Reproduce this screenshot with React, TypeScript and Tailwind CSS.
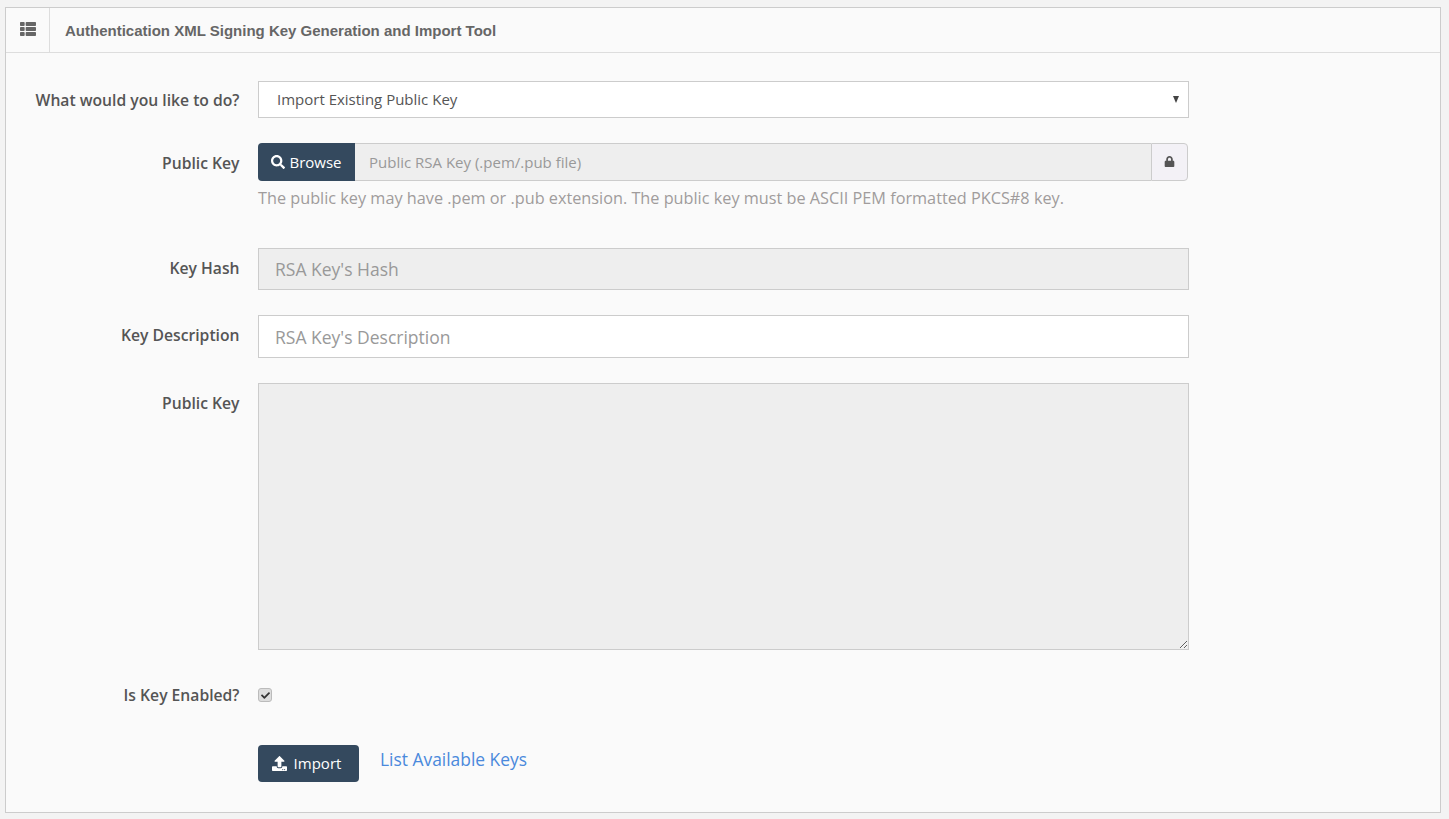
import React from "react";
import { FaLock, FaSearch, FaThList, FaUpload, FaCheck } from "react-icons/fa";

const labelClass = "w-[234px] shrink-0 text-right text-[15.7px] font-semibold text-[#555] pr-[0.5px]";

const App = () => {
  return (
    <div className="h-[819px] overflow-hidden bg-[#f3f3f3] pl-[5px] pr-2 pt-[7px] font-['Open_Sans',sans-serif]">
      <div className="h-[806px] border border-[#cccccc] bg-[#fafafa]">
        <header className="flex h-[45px] items-center border-b border-[#dddddd]">
          <div className="flex h-[44px] w-[44px] shrink-0 items-center justify-center border-r border-[#dddddd] pb-[2px] text-[#666]">
            <FaThList className="h-[16px] w-[16px]" />
          </div>
          <h1 className="pl-[15px] pt-[2px] font-['Liberation_Sans',sans-serif] text-[15px] font-bold text-[#666]">
            Authentication XML Signing Key Generation and Import Tool
          </h1>
        </header>

        <form className="pt-[28px]">
          <div className="flex items-center">
            <label className={`${labelClass} pt-[2px]`}>What would you like to do?</label>
            <div className="relative ml-[18px] w-[931px]">
              <select className="h-[37px] w-full appearance-none border border-[#cccccc] bg-white pl-[18px] text-[15px] text-[#555]">
                <option>Import Existing Public Key</option>
              </select>
              <span className="absolute right-[10px] top-[15px] h-0 w-0 border-x-[3.5px] border-t-[7px] border-x-transparent border-t-[#444]" />
            </div>
          </div>

          <div className="mt-[25px] flex items-center">
            <label className={`${labelClass} pt-[4px]`}>Public Key</label>
            <div className="ml-[18px] flex h-[38px] w-[930px]">
              <button
                type="button"
                className="flex w-[97px] shrink-0 items-center justify-center gap-1 rounded-l-[4px] bg-[#34495e] text-[15px] font-medium text-white"
              >
                <FaSearch className="h-[14px] w-[14px]" />
                Browse
              </button>
              <input
                disabled
                placeholder="Public RSA Key (.pem/.pub file)"
                className="min-w-0 flex-1 border-y border-[#cccccc] bg-[#eeeeee] px-[14px] text-[15px] placeholder:text-[#999]"
              />
              <div className="flex w-[37px] shrink-0 items-center justify-center rounded-r-[4px] border border-[#cccccc] bg-[#f3f1f6] pb-[1px] text-[#555]">
                <FaLock className="h-[11px] w-[11px]" />
              </div>
            </div>
          </div>
          <p className="ml-[252px] mt-[6px] text-[16.25px] leading-[22px] text-[#a09c9c]">
            The public key may have .pem or .pub extension. The public key must be ASCII PEM formatted PKCS#8 key.
          </p>

          <div className="mt-[39px] flex items-center">
            <label className={labelClass}>Key Hash</label>
            <input
              disabled
              placeholder="RSA Key's Hash"
              className="ml-[18px] h-[42px] w-[931px] border border-[#cccccc] bg-[#eeeeee] px-4 text-[17.5px] placeholder:text-[#999]"
            />
          </div>

          <div className="mt-[25px] flex items-center">
            <label className={`${labelClass} pb-[2px]`}>Key Description</label>
            <input
              placeholder="RSA Key's Description"
              className="ml-[18px] h-[43px] w-[931px] border border-[#cccccc] bg-white px-4 text-[17.5px] placeholder:text-[#999]"
            />
          </div>

          <div className="mt-[25px] flex items-start">
            <label className={`${labelClass} pt-[9px]`}>Public Key</label>
            <textarea
              disabled
              className="ml-[18px] block h-[267px] w-[931px] resize-y border border-[#cccccc] bg-[#eeeeee]"
            />
          </div>

          <div className="mt-[33px] flex h-[24px] items-center">
            <label className={`${labelClass} pt-[2px]`}>Is Key Enabled?</label>
            <span className="ml-[18px] flex h-[14px] w-[14px] items-center justify-center rounded-[3px] border border-[#bbbbbb] bg-[#dddddd] text-[#333]">
              <FaCheck className="h-[9px] w-[9px]" />
            </span>
          </div>

          <div className="mt-[38px] ml-[252px] flex items-start">
            <button
              type="button"
              className="flex h-[37px] w-[101px] items-center justify-center gap-[7px] rounded-[4px] bg-[#34495e] pr-[4px] text-[15px] text-white"
            >
              <FaUpload className="h-[15px] w-[15px]" />
              Import
            </button>
            <a href="#" className="ml-[21px] text-[17.4px] leading-[28px] text-[#4a89dc]">
              List Available Keys
            </a>
          </div>
        </form>
      </div>
    </div>
  );
};

export default App;
